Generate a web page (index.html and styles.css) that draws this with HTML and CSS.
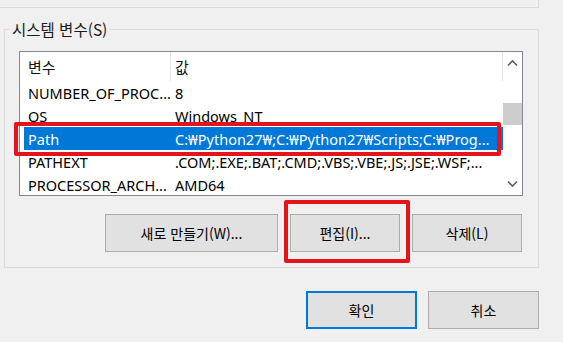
FILE: index.html
```html
<!DOCTYPE html>
<html lang="ko">
<head>
<meta charset="utf-8">
<link rel="stylesheet" href="styles.css">
</head>
<body>
<div class="prev-group"></div>
<fieldset class="group">
  <legend class="legend">시스템 변수(S)</legend>
  <div class="list">
    <div class="list-body">
      <div class="row header">
        <div class="c1">변수</div>
        <div class="c2">값</div>
      </div>
      <div class="row"><div class="c1">NUMBER_OF_PROC...</div><div class="c2">8</div></div>
      <div class="row"><div class="c1">OS</div><div class="c2">Windows_NT</div></div>
      <div class="row selected"><div class="c1">Path</div><div class="c2">C:₩Python27₩;C:₩Python27₩Scripts;C:₩Prog...</div></div>
      <div class="row"><div class="c1">PATHEXT</div><div class="c2">.COM;.EXE;.BAT;.CMD;.VBS;.VBE;.JS;.JSE;.WSF;...</div></div>
      <div class="row"><div class="c1">PROCESSOR_ARCH...</div><div class="c2">AMD64</div></div>
    </div>
    <div class="scrollbar">
      <svg class="arrow" width="19" height="22" viewBox="0 0 19 22"><path d="M5 13.5 L9.5 9 L14 13.5" fill="none" stroke="#606060" stroke-width="1.6"/></svg>
      <div class="track"><div class="thumb"></div></div>
      <svg class="arrow" width="19" height="22" viewBox="0 0 19 22"><path d="M5 8.5 L9.5 13 L14 8.5" fill="none" stroke="#606060" stroke-width="1.6"/></svg>
    </div>
  </div>
  <div class="actions">
    <button class="btn wide">새로 만들기(W)...</button>
    <button class="btn">편집(I)...</button>
    <button class="btn">삭제(L)</button>
  </div>
</fieldset>
<div class="footer">
  <button class="btn default">확인</button>
  <button class="btn">취소</button>
</div>
<div class="mark mark-row"></div>
<div class="mark mark-btn"></div>
</body>
</html>
```
FILE: styles.css
```css
html, body {
  margin: 0;
  padding: 0;
}
body {
  background: #f0f0f0;
  width: 563px;
  height: 342px;
  overflow: hidden;
  position: relative;
  font-family: "Noto Sans", "Noto Sans CJK KR", sans-serif;
  font-size: 14.5px;
  color: #000;
}
.prev-group {
  width: 539px;
  height: 8px;
  border-right: 1px solid #dcdcdc;
  border-bottom: 1px solid #dcdcdc;
  box-sizing: border-box;
}
.group {
  margin: 12px 0 0 4px;
  width: 535px;
  height: 248px;
  box-sizing: border-box;
  border: 1px solid #dcdcdc;
  padding: 0 15px 0 14px;
  min-width: 0;
}
.legend {
  padding: 0 2px;
  margin-left: -9px;
  font-family: "Noto Sans CJK KR", sans-serif;
  font-size: 15.5px;
  line-height: 18px;
  color: #1a1a1a;
}
.list {
  margin-top: 13px;
  height: 145px;
  border: 1px solid #828790;
  background: #fff;
  display: flex;
  overflow: hidden;
  box-sizing: border-box;
}
.list-body {
  flex: 1;
  display: flex;
  flex-direction: column;
  overflow: hidden;
}
.row {
  display: flex;
  height: 23px;
  flex: none;
  align-items: center;
  margin-left: 4px;
  white-space: nowrap;
  line-height: 20px;
}
.row.header {
  height: 29px;
  margin-left: 0;
  padding-left: 4px;
  border-right: 1px solid #e5e5e5;
  font-family: "Noto Sans CJK KR", sans-serif;
  font-size: 15px;
  color: #111;
}
.c1 {
  width: 147px;
  padding-left: 4px;
  box-sizing: border-box;
  flex: none;
  height: 100%;
  display: flex;
  align-items: center;
}
.header .c1 {
  border-right: 1px solid #e5e5e5;
}
.c2 {
  padding-left: 4px;
  flex: 1;
  overflow: hidden;
}
.row.selected {
  background: #0078d7;
  color: #fff;
}
.scrollbar {
  width: 19px;
  flex: none;
  display: flex;
  flex-direction: column;
  background: #fff;
}
.arrow {
  display: block;
  flex: none;
}
.track {
  flex: 1;
  padding-top: 29px;
}
.thumb {
  height: 22px;
  background: #cdcdcd;
}
.actions {
  display: flex;
  justify-content: flex-end;
  gap: 12px;
  margin-top: 18px;
  padding-right: 1px;
}
.btn {
  font-family: "Noto Sans CJK KR", sans-serif;
  font-size: 14px;
  color: #000;
  background: #e1e1e1;
  border: 1px solid #adadad;
  width: 110px;
  height: 38px;
  padding: 0;
  margin: 0;
  box-sizing: border-box;
}
.btn.wide {
  width: 173px;
}
.btn.default {
  border: 2px solid #0078d7;
}
.footer {
  display: flex;
  justify-content: flex-end;
  gap: 11px;
  width: 539px;
  margin-top: 23px;
}
.footer .btn {
  width: 111px;
}
.mark {
  position: absolute;
  border: 4px solid #e3141b;
  border-radius: 2px;
  box-sizing: border-box;
}
.mark-row {
  left: 14px;
  top: 122px;
  width: 487px;
  height: 34px;
}
.mark-btn {
  left: 284px;
  top: 200px;
  width: 126px;
  height: 63px;
}
```
